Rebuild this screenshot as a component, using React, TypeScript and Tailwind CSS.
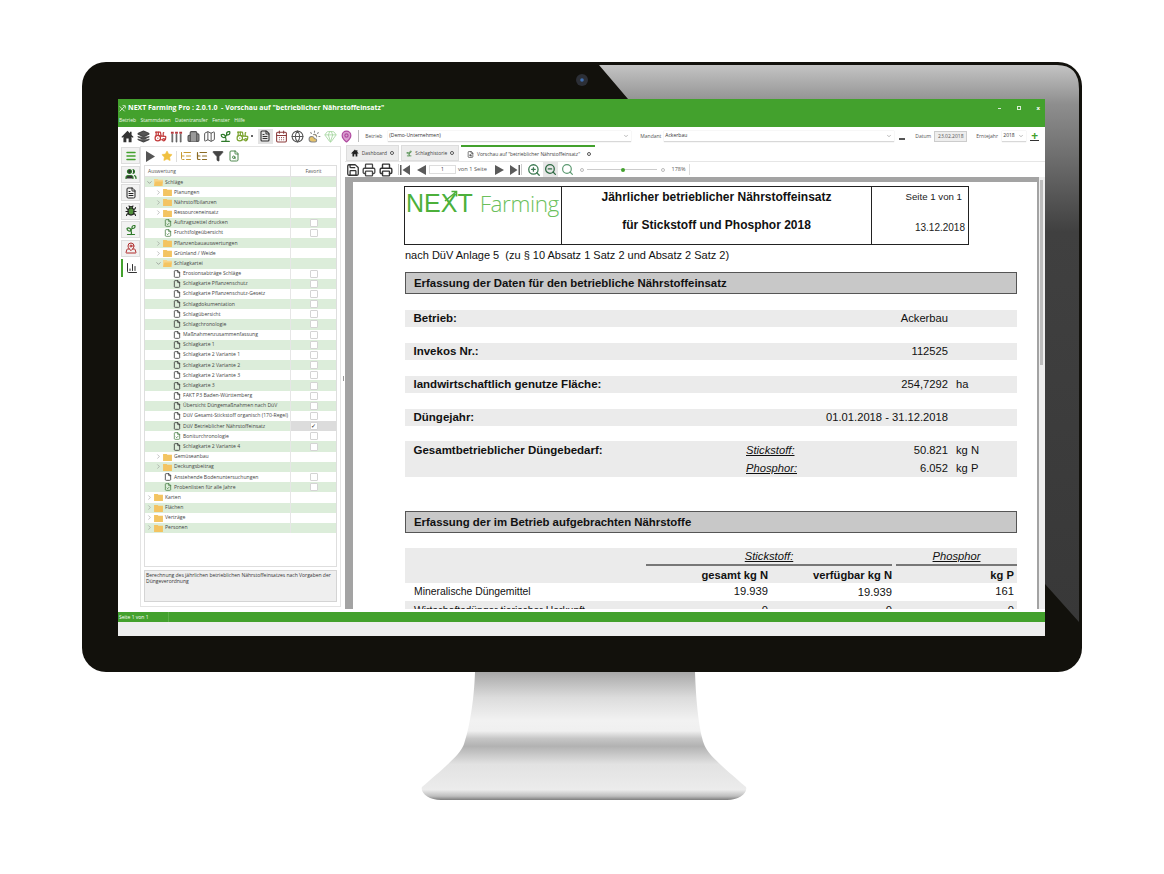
import {
  Building2,
  CalendarDays,
  ChartColumn,
  ChevronDown,
  ChevronRight,
  CloudSun,
  File,
  FileCheck,
  FileSearch,
  FileText,
  Filter,
  Gem,
  Globe,
  Layers,
  ListTree,
  Map,
  MapPin,
  MapPinned,
  Menu,
  Printer,
  Save,
  Sprout,
  Star,
  Tractor,
  Users,
  Bug,
  ZoomIn,
  ZoomOut,
  Search,
} from "lucide-react";

type Kind = "open" | "closed" | "file" | "report";
type Row = { label: string; level: 1 | 2 | 3; kind: Kind; fav?: boolean; checked?: boolean };

const rows: Row[] = [
  { label: "Schläge", level: 1, kind: "open" },
  { label: "Planungen", level: 2, kind: "closed" },
  { label: "Nährstoffbilanzen", level: 2, kind: "closed" },
  { label: "Ressourceneinsatz", level: 2, kind: "closed" },
  { label: "Auftragszettel drucken", level: 2, kind: "report", fav: true },
  { label: "Fruchtfolgeübersicht", level: 2, kind: "report", fav: true },
  { label: "Pflanzenbauauswertungen", level: 2, kind: "closed" },
  { label: "Grünland / Weide", level: 2, kind: "closed" },
  { label: "Schlagkartei", level: 2, kind: "open" },
  { label: "Erosionsabträge Schläge", level: 3, kind: "file", fav: true },
  { label: "Schlagkarte Pflanzenschutz", level: 3, kind: "file", fav: true },
  { label: "Schlagkarte Pflanzenschutz-Gesetz", level: 3, kind: "file", fav: true },
  { label: "Schlagdokumentation", level: 3, kind: "file", fav: true },
  { label: "Schlagübersicht", level: 3, kind: "file", fav: true },
  { label: "Schlagchronologie", level: 3, kind: "file", fav: true },
  { label: "Maßnahmenzusammenfassung", level: 3, kind: "file", fav: true },
  { label: "Schlagkarte 1", level: 3, kind: "file", fav: true },
  { label: "Schlagkarte 2 Variante 1", level: 3, kind: "file", fav: true },
  { label: "Schlagkarte 2 Variante 2", level: 3, kind: "file", fav: true },
  { label: "Schlagkarte 2 Variante 3", level: 3, kind: "file", fav: true },
  { label: "Schlagkarte 3", level: 3, kind: "file", fav: true },
  { label: "FAKT P3 Baden-Württemberg", level: 3, kind: "file", fav: true },
  { label: "Übersicht Düngemaßnahmen nach DüV", level: 3, kind: "file", fav: true },
  { label: "DüV Gesamt-Stickstoff organisch (170-Regel)", level: 3, kind: "file", fav: true },
  { label: "DüV Betrieblicher Nährstoffeinsatz", level: 3, kind: "file", fav: true, checked: true },
  { label: "Boniturchronologie", level: 3, kind: "report", fav: true },
  { label: "Schlagkarte 2 Variante 4", level: 3, kind: "file", fav: true },
  { label: "Gemüseanbau", level: 2, kind: "closed" },
  { label: "Deckungsbeitrag", level: 2, kind: "closed" },
  { label: "Anstehende Bodenuntersuchungen", level: 2, kind: "file", fav: true },
  { label: "Probenlisten für alle Jahre", level: 2, kind: "report", fav: true },
  { label: "Karten", level: 1, kind: "closed" },
  { label: "Flächen", level: 1, kind: "closed" },
  { label: "Verträge", level: 1, kind: "closed" },
  { label: "Personen", level: 1, kind: "closed" },
];

const indent = { 1: "w-0", 2: "w-[9px]", 3: "w-[18px]" };

function FolderIcon({ open }: { open?: boolean }) {
  return (
    <svg viewBox="0 0 10 9" className="h-[8px] w-[9px]">
      <path d="M0 1h4l1 1h5v7H0z" fill={open ? "#f7d488" : "#f3c462"} />
      {open && <path d="M1.5 4H10L8.5 9H0z" fill="#f3c462" />}
    </svg>
  );
}

function HomeIcon({ size, className }: { size: number; className: string }) {
  return (
    <svg viewBox="0 0 16 16" width={size} height={size} className={className}>
      <path d="M8 1L0.5 8.5 1.6 9.6 3 8.3V15h3.6v-4.5h2.8V15H13V8.3l1.4 1.3 1.1-1.1L13 6V2h-2v2z" fill="currentColor" />
    </svg>
  );
}

function TubesIcon() {
  return (
    <svg viewBox="0 0 14 14" className="size-[13px]">
      <path d="M1 2h3v2H1zM5.5 2h3v2h-3zM10 2h3v2h-3z" fill="#b5383c" />
      <path d="M2 4.5h1V13H2zM6.5 4.5h1V13h-1zM11 4.5h1V13h-1z" fill="#777" stroke="#555" strokeWidth="0.7" />
    </svg>
  );
}

function TreeRow({ row, odd }: { row: Row; odd: boolean }) {
  return (
    <div className={`flex h-[10.18px] items-center ${odd ? "bg-white" : "bg-[#dcedda]"}`}>
      <div className="flex h-full w-[145px] items-center overflow-hidden">
        <span className={`shrink-0 ${indent[row.level]}`} />
        <span className="flex w-[9px] shrink-0 justify-center text-[#777]">
          {row.kind === "closed" && <ChevronRight size={7} strokeWidth={1.5} />}
          {row.kind === "open" && <ChevronDown size={7} strokeWidth={2} />}
        </span>
        <span className="flex w-[9px] shrink-0 justify-center">
          {row.kind === "closed" && <FolderIcon />}
          {row.kind === "open" && <FolderIcon open />}
          {row.kind === "file" && <File size={8} strokeWidth={2.2} className="text-[#222]" />}
          {row.kind === "report" && <FileCheck size={8} strokeWidth={2} className="text-[#2f6b2a]" />}
        </span>
        <span className="ml-[2px] whitespace-nowrap text-[5.1px] leading-none text-[#444]">{row.label}</span>
      </div>
      <div
        className={`flex h-full flex-1 items-center justify-center border-l border-[#e6e6e6] ${row.checked ? "bg-[#dcdcdc]" : ""}`}
      >
        {row.fav && (
          <span className="flex size-[8px] items-center justify-center rounded-[1px] border border-[#d4d4d4] bg-white text-[6px] leading-none text-[#222]">
            {row.checked ? "✓" : ""}
          </span>
        )}
      </div>
    </div>
  );
}

function Tri({ dir, bar }: { dir: "l" | "r"; bar?: boolean }) {
  return (
    <svg viewBox="0 0 12 12" className="size-[12px] text-[#5a5a5a]">
      {dir === "l" ? (
        <path d={bar ? "M1 1h1.5v10H1zM11 1v10L3.5 6z" : "M11 1v10L2 6z"} fill="currentColor" />
      ) : (
        <path d={bar ? "M11 1H9.5v10H11zM1 1v10l7.5-5z" : "M1 1v10l9-5z"} fill="currentColor" />
      )}
    </svg>
  );
}

function Combo({ text, className }: { text: string; className: string }) {
  return (
    <div className={`flex h-[11px] items-center justify-between border-b border-[#d8d8d8] bg-white pl-[1px] pr-[2px] shadow-[0_0_1px_#ccc] ${className}`}>
      <span className="text-[5px] leading-none text-[#333]">{text}</span>
      <ChevronDown size={6} className="text-[#777]" />
    </div>
  );
}

function InfoRow({ label, value, unit }: { label: string; value: string; unit?: string }) {
  return (
    <div className="mb-[16px] flex h-[17px] items-center bg-[#ebebeb] text-[11.2px] text-[#111]">
      <div className="flex w-[543px] items-center justify-between pl-[8.5px]">
        <span className="text-[11.5px] font-bold">{label}</span>
        <span>{value}</span>
      </div>
      {unit && <span className="ml-[8px]">{unit}</span>}
    </div>
  );
}

function SectionBar({ children }: { children: string }) {
  return (
    <div className="flex h-[22px] items-center border border-[#555] bg-[#c8c8c8] pl-[8px] pt-px text-[11.4px] font-bold text-[#111]">
      {children}
    </div>
  );
}

function Tab({ icon, label, active, className }: { icon: React.ReactNode; label: string; active?: boolean; className: string }) {
  return (
    <div
      className={`flex items-center gap-[3px] ${className} ${
        active ? "h-[16px] border-t-2 border-[#43a12d] bg-white pl-[6px] pr-[4px]" : "h-[16px] border border-[#ddd] bg-[#ececec] px-[4px]"
      }`}
    >
      {icon}
      <span className="flex-1 whitespace-nowrap text-[4.9px] leading-none text-[#444]">{label}</span>
      <span className="size-[4px] rounded-full border border-[#555] bg-white" />
    </div>
  );
}

function Screen() {
  return (
    <div className="relative flex h-[537px] w-[927px] flex-col bg-white [font-family:'Open_Sans','Noto_Sans',sans-serif]">
      {/* title + menu */}
      <div className="flex h-[28px] flex-col bg-[#43a12d] text-white">
        <div className="flex h-[18px] items-center pl-[1px] pr-[5px]">
          <svg viewBox="0 0 10 10" className="size-[7px] text-[#cfe8c8]">
            <path d="M1 2l7 7M1 9l7-7M5 1h4v4" fill="none" stroke="currentColor" strokeWidth="1.4" />
          </svg>
          <span className="ml-[2px] whitespace-pre text-[6.95px] font-bold leading-none">
            NEXT Farming Pro : 2.0.1.0  - Vorschau auf "betrieblicher Nährstoffeinsatz"
          </span>
          <div className="ml-auto flex items-center gap-[16px] text-[6px] leading-none">
            <span className="h-px w-[3px] bg-white/80" />
            <span className="size-[4px] border border-white/80" />
            <span className="font-bold">x</span>
          </div>
        </div>
        <div className="flex h-[10px] items-start gap-[4.5px] pl-[1px] pt-px text-[5px] leading-[5px] text-white/90">
          <span>Betrieb</span>
          <span>Stammdaten</span>
          <span>Datentransfer</span>
          <span>Fenster</span>
          <span>Hilfe</span>
        </div>
      </div>

      {/* main toolbar */}
      <div className="flex h-[18px] items-center pl-[3px] pr-[4px]">
        <div className="flex items-center gap-[3.4px]">
          <HomeIcon size={13} className="text-[#333]" />
          <Layers size={13} strokeWidth={2.2} fill="#555" className="text-[#444]" />
          <Tractor size={13} strokeWidth={2.2} className="text-[#c23b3b]" />
          <TubesIcon />
          <Building2 size={13} strokeWidth={2.2} fill="#999" className="text-[#555]" />
          <Map size={13} strokeWidth={1.8} className="text-[#555]" />
          <Sprout size={13} strokeWidth={2.2} className="text-[#2f7a2a]" />
          <Tractor size={13} strokeWidth={2.2} className="text-[#7aa32f]" />
        </div>
        <span className="ml-[2px] size-[2px] rounded-full bg-[#333]" />
        <div className="ml-[5px] flex size-[15px] items-center justify-center bg-[#e3e3e3]">
          <FileText size={12} strokeWidth={2.2} className="text-[#333]" />
        </div>
        <div className="ml-[2px] flex items-center gap-[3.4px]">
          <CalendarDays size={13} strokeWidth={2} className="text-[#8b3a3a]" />
          <Globe size={13} strokeWidth={2} className="text-[#555]" />
          <CloudSun size={13} strokeWidth={2} fill="#e6c36a" className="text-[#8a8a8a]" />
          <Gem size={13} strokeWidth={1.6} className="text-[#a6d6a0]" />
          <MapPin size={13} strokeWidth={2.2} fill="#d9a0d0" className="text-[#b04aa0]" />
        </div>
        <span className="ml-[5px] h-[12px] w-px bg-[#bbb]" />
        <span className="ml-[6px] w-[23px] text-[5px] leading-none text-[#555]">Betrieb</span>
        <Combo text="(Demo-Unternehmen)" className="w-[243px]" />
        <span className="ml-[9px] w-[24px] text-[5px] leading-none text-[#555]">Mandant</span>
        <Combo text="Ackerbau" className="w-[230px]" />
        <span className="ml-[5px] mt-[6px] h-[1.5px] w-[6px] bg-[#555]" />
        <span className="ml-[10px] w-[19px] text-[5px] leading-none text-[#555]">Datum</span>
        <div className="flex h-[11px] w-[33px] items-center justify-center border border-[#ccc] bg-[#eee] text-[5px] leading-none text-[#555]">
          23.02.2018
        </div>
        <span className="ml-[9px] w-[26px] text-[5px] leading-none text-[#555]">Erntejahr</span>
        <Combo text="2018" className="w-[24px]" />
        <div className="ml-[4px] flex flex-col items-center">
          <span className="text-[12px] font-bold leading-[9px] text-[#43a12d]">+</span>
          <span className="h-[1.5px] w-[9px] bg-[#333]" />
        </div>
      </div>

      {/* body */}
      <div className="flex h-[467px]">
        {/* rail */}
        <div className="flex w-[22px] flex-col items-center gap-[1.6px] pl-[3px] pt-[2px]">
          {[
            <Menu key="m" size={12} strokeWidth={3} className="text-[#43a12d]" />,
            <Users key="u" size={12} strokeWidth={2.4} fill="#333" className="text-[#2d7a2a]" />,
            <FileText key="f" size={12} strokeWidth={2} className="text-[#222]" />,
            <Bug key="b" size={12} strokeWidth={2.2} fill="#4f8f3a" className="text-[#222]" />,
            <Sprout key="s" size={12} strokeWidth={2.4} className="text-[#2f7a2a]" />,
            <MapPinned key="p" size={12} strokeWidth={2} className="text-[#b02a2a]" />,
          ].map((icon) => (
            <div key={icon.key} className="flex h-[17px] w-[19px] items-center justify-center border border-[#ddd] bg-[#f2f2f2]">
              {icon}
            </div>
          ))}
          <div className="flex h-[18px] w-[19px] items-center justify-center border-l-2 border-[#43a12d] bg-white">
            <ChartColumn size={12} strokeWidth={2} className="text-[#333]" />
          </div>
        </div>

        {/* analysis panel */}
        <div className="mb-[5px] mt-px flex w-[201px] flex-col border border-[#e4e4e4] px-[3px]">
          <div className="flex h-[18px] items-center pl-[2px]">
            <svg viewBox="0 0 10 12" className="h-[11px] w-[9px]">
              <path d="M0 0l10 6-10 6z" fill="#555" />
            </svg>
            <Star size={12} fill="#f0c040" strokeWidth={1} className="ml-[6px] text-[#f0c040]" />
            <span className="ml-[3px] h-[11px] w-px bg-[#ddd]" />
            <ListTree size={12} strokeWidth={2} className="ml-[3px] text-[#c79a32]" />
            <ListTree size={12} strokeWidth={2.4} className="ml-[4px] text-[#8a6a22]" />
            <Filter size={12} fill="#444" strokeWidth={1.6} className="ml-[4px] text-[#444]" />
            <FileSearch size={12} strokeWidth={1.8} className="ml-[4px] text-[#3a7a3a]" />
          </div>
          <div className="flex h-[402px] flex-col border border-[#dedede]">
            <div className="flex h-[11px] shrink-0 items-center border-b border-[#e2e2e2] text-[5px] leading-none text-[#555]">
              <span className="w-[145px] pl-[3px]">Auswertung</span>
              <span className="flex-1 border-l border-[#e2e2e2] text-center leading-[10px]">Favorit</span>
            </div>
            {rows.map((row, i) => (
              <TreeRow key={row.label} row={row} odd={i % 2 === 1} />
            ))}
          </div>
          <div className="mt-[3px] h-[32px] border border-[#d4d4d4] bg-[#efefef] pl-px pr-[5px] pt-[1px] text-[5px] leading-[6.4px] text-[#333]">
            Berechnung des jährlichen betrieblichen Nährstoffeinsatzes nach Vorgaben der Düngeverordnung
          </div>
        </div>

        {/* splitter */}
        <div className="flex w-[4px] items-center justify-center">
          <span className="h-[5px] w-px bg-[#999]" />
        </div>

        {/* preview */}
        <div className="flex w-[700px] flex-col">
          <div className="flex h-[16px] items-end gap-[2px] pl-px">
            <Tab className="w-[53px]" icon={<HomeIcon size={8} className="text-[#222]" />} label="Dashboard" />
            <Tab className="w-[58px]" icon={<Sprout size={7} strokeWidth={2.6} className="text-[#2f7a2a]" />} label="Schlaghistorie" />
            <Tab active className="w-[134px]" icon={<FileSearch size={7} strokeWidth={2} className="text-[#222]" />} label={'Vorschau auf "betrieblicher Nährstoffeinsatz"'} />
          </div>
          <div className="flex h-[16px] items-center border-t border-[#e6e6e6] pl-[1px]">
            <Save size={14} strokeWidth={2.2} className="text-[#333]" />
            <Printer size={14} strokeWidth={2.2} className="ml-[2px] text-[#444]" />
            <Printer size={14} strokeWidth={2.4} className="ml-[3px] text-[#333]" />
            <span className="ml-[5px] h-[11px] w-px bg-[#ccc]" />
            <Tri dir="l" bar />
            <span className="ml-[4px]"><Tri dir="l" /></span>
            <div className="ml-[2px] flex h-[9px] w-[27px] items-center justify-center border border-[#ddd] text-[5px] leading-none text-[#333]">
              1
            </div>
            <span className="ml-[2px] w-[31px] whitespace-nowrap text-[5.7px] leading-none text-[#555]">von 1 Seite</span>
            <span className="ml-[5px]"><Tri dir="r" /></span>
            <span className="ml-[3px]"><Tri dir="r" bar /></span>
            <span className="h-[11px] w-px bg-[#ccc]" />
            <ZoomIn size={14} strokeWidth={2.2} className="ml-[5px] text-[#3d7a52]" />
            <div className="ml-[1.5px] flex size-[15px] items-center justify-center bg-[#e6e6e6]">
              <ZoomOut size={13} strokeWidth={2.4} className="text-[#2f6a44]" />
            </div>
            <Search size={13} strokeWidth={2.2} className="ml-[3px] text-[#5d9a72]" />
            <span className="ml-[6px] size-[4px] rounded-full border border-[#bbb]" />
            <div className="relative ml-[3px] flex h-[5px] w-[70px] items-center">
              <span className="h-px w-full bg-[#ccc]" />
              <span className="absolute left-[34px] size-[4px] rounded-full bg-[#43a12d]" />
            </div>
            <span className="ml-[4px] size-[4px] rounded-full border border-[#bbb]" />
            <span className="ml-[7px] text-[5.5px] leading-none text-[#555]">178%</span>
            <span className="ml-[4px] h-[11px] w-px bg-[#ddd]" />
          </div>

          <div className="flex h-[432px] overflow-hidden">
            <div className="flex flex-1 flex-col border-l-[8px] border-r-[2px] border-t-[5px] border-[#a3a3a3] bg-white">
              <div className="h-[427px] overflow-hidden pl-[51px] pr-[20px] pt-[4px] [font-family:'Liberation_Sans',Arial,sans-serif]">
                {/* report head */}
                <div className="grid h-[59px] w-[565px] grid-cols-[157px_309px_99px] border border-[#222]">
                  <div className="relative border-r border-[#222] pl-[1px] pt-[2px]">
                    <div className="flex items-baseline whitespace-nowrap">
                      <span className="text-[25px] leading-[28px] text-[#4cb03a]">NEXT</span>
                      <span className="ml-[7px] text-[22.5px] font-light leading-[28px] tracking-[-0.4px] text-[#6cbf5c] [font-family:'Open_Sans',sans-serif]">
                        Farming
                      </span>
                    </div>
                    <svg viewBox="0 0 20 12" className="absolute left-[37px] top-[3px] h-[12px] w-[20px]">
                      <path d="M3 11L14 2M9.5 1.5h5v5" fill="none" stroke="#4cb03a" strokeWidth="1.6" />
                    </svg>
                  </div>
                  <div className="flex flex-col items-center pt-[3px] text-[12px] font-bold leading-[14px] text-[#111]">
                    <span>Jährlicher betrieblicher Nährstoffeinsatz</span>
                    <span className="mt-[14px]">für Stickstoff und Phosphor 2018</span>
                  </div>
                  <div className="flex flex-col items-end border-l border-[#222] pr-[6px] pt-[3px] text-[9.7px] leading-[14px] text-[#222]">
                    <span className="mr-[2px]">Seite 1 von 1</span>
                    <span className="-mr-px mt-[17px] text-[10px]">13.12.2018</span>
                  </div>
                </div>
                <div className="ml-px mt-[1px] h-[26px] whitespace-pre text-[11px] leading-[18px] text-[#111]">
                  nach DüV Anlage 5  (zu § 10 Absatz 1 Satz 2 und Absatz 2 Satz 2)
                </div>

                <div className="ml-px">
                  <SectionBar>Erfassung der Daten für den betriebliche Nährstoffeinsatz</SectionBar>
                  <div className="mt-[16px]">
                    <InfoRow label="Betrieb:" value="Ackerbau" />
                    <InfoRow label="Invekos Nr.:" value="112525" />
                    <InfoRow label="landwirtschaftlich genutze Fläche:" value="254,7292" unit="ha" />
                    <InfoRow label="Düngejahr:" value="01.01.2018 - 31.12.2018" />
                  </div>
                  <div className="-mt-px grid h-[36px] grid-cols-[341px_110px_92px_1fr] grid-rows-2 items-center bg-[#ebebeb] pt-px text-[11.2px] text-[#111]">
                    <span className="pl-[8.5px] text-[11.5px] font-bold">Gesamtbetrieblicher Düngebedarf:</span>
                    <span className="italic underline">Stickstoff:</span>
                    <span className="text-right">50.821</span>
                    <span className="pl-[8px]">kg N</span>
                    <span />
                    <span className="italic underline">Phosphor:</span>
                    <span className="text-right">6.052</span>
                    <span className="pl-[8px]">kg P</span>
                  </div>

                  <div className="mt-[34px]">
                    <SectionBar>Erfassung der im Betrieb aufgebrachten Nährstoffe</SectionBar>
                  </div>
                  <div className="mt-[15px] flex flex-col text-[11.2px] leading-[13px] text-[#111]">
                    <div className="grid h-[18px] grid-cols-[241px_246px_125px] bg-[#ebebeb]">
                      <span />
                      <div className="flex flex-col items-center justify-end">
                        <span className="mb-px italic underline">Stickstoff:</span>
                        <span className="h-[2px] w-full bg-[#777]" />
                      </div>
                      <div className="ml-[4px] flex flex-col items-center justify-end">
                        <span className="mb-px italic underline">Phosphor</span>
                        <span className="h-[2px] w-full bg-[#777]" />
                      </div>
                    </div>
                    <div className="grid h-[17px] grid-cols-[241px_122px_124px_122px] items-center bg-[#ebebeb] pt-px text-right font-bold">
                      <span />
                      <span>gesamt kg N</span>
                      <span>verfügbar kg N</span>
                      <span>kg P</span>
                    </div>
                    <div className="grid h-[18px] grid-cols-[241px_122px_124px_122px] items-center text-right">
                      <span className="pb-[2px] pl-[9px] text-left text-[10.4px]">Mineralische Düngemittel</span>
                      <span className="pb-[2px]">19.939</span>
                      <span>19.939</span>
                      <span className="pb-[2px]">161</span>
                    </div>
                    <div className="grid h-[18px] grid-cols-[241px_122px_124px_122px] items-center bg-[#ebebeb] text-right">
                      <span className="pl-[9px] text-left text-[10.4px]">Wirtschaftsdünger tierischer Herkunft</span>
                      <span>0</span>
                      <span>0</span>
                      <span>0</span>
                    </div>
                  </div>
                </div>
              </div>
            </div>
            <div className="w-[6px] bg-[#eeeeee] pl-px pt-[3px]">
              <div className="h-[185px] w-[3px] bg-[#bdbdbd]" />
            </div>
          </div>
          <div className="h-[3px]" />
        </div>
      </div>

      {/* status */}
      <div className="flex h-[10px] items-center bg-[#43a12d] pl-px text-[5px] leading-none text-white">
        <span className="w-[49px]">Seite 1 von 1</span>
        <span className="h-full w-px bg-[#5cb048]" />
      </div>
      <div className="h-[14px] bg-[#eeeeee]" />
    </div>
  );
}

export default function App() {
  return (
    <div className="h-[874px] w-[1164px] overflow-hidden bg-white pl-[82px] pt-[62px]">
      <div className="relative h-[610px] w-[1000px] rounded-[24px] bg-[#12110c] pl-[36px] pt-[37px]">
        <svg viewBox="0 0 1000 610" className="absolute inset-0 size-full">
          <defs>
            <linearGradient id="glare" x1="0" y1="0" x2="0" y2="1">
              <stop offset="0" stopColor="#c4c4c4" />
              <stop offset="0.07" stopColor="#8e8e8e" />
              <stop offset="0.3" stopColor="#404040" />
              <stop offset="1" stopColor="#383838" />
            </linearGradient>
          </defs>
          <path d="M517 3H975Q997 3 997 27V560L963 522V37H546z" fill="url(#glare)" />
          <circle cx="500" cy="18" r="6" fill="#2c2f36" />
          <circle cx="500" cy="18" r="1.8" fill="#3f6fb0" />
        </svg>
        <Screen />
      </div>
      <svg viewBox="0 0 326 128" className="ml-[339px] h-[128px] w-[326px]">
        <defs>
          <linearGradient id="neck" x1="0" y1="0" x2="0" y2="1">
            <stop offset="0" stopColor="#a8a8a8" />
            <stop offset="0.2" stopColor="#dcdcdc" />
            <stop offset="0.38" stopColor="#f2f2f2" />
            <stop offset="0.46" stopColor="#f0f0f0" />
            <stop offset="0.52" stopColor="#c6c6c6" />
            <stop offset="0.58" stopColor="#b2b2b2" />
            <stop offset="0.72" stopColor="#e2e2e2" />
            <stop offset="0.92" stopColor="#ececec" />
            <stop offset="0.97" stopColor="#bdbdbd" />
            <stop offset="1" stopColor="#7d7d7d" />
          </linearGradient>
        </defs>
        <path
          d="M54 0H274C275 30 278 58 283 72C286 80 291 86 325 115C327 121 318 128 306 128H20C8 128 -1 121 1 115C35 86 40 80 43 72C48 58 53 30 54 0Z"
          fill="url(#neck)"
        />
      </svg>
    </div>
  );
}
